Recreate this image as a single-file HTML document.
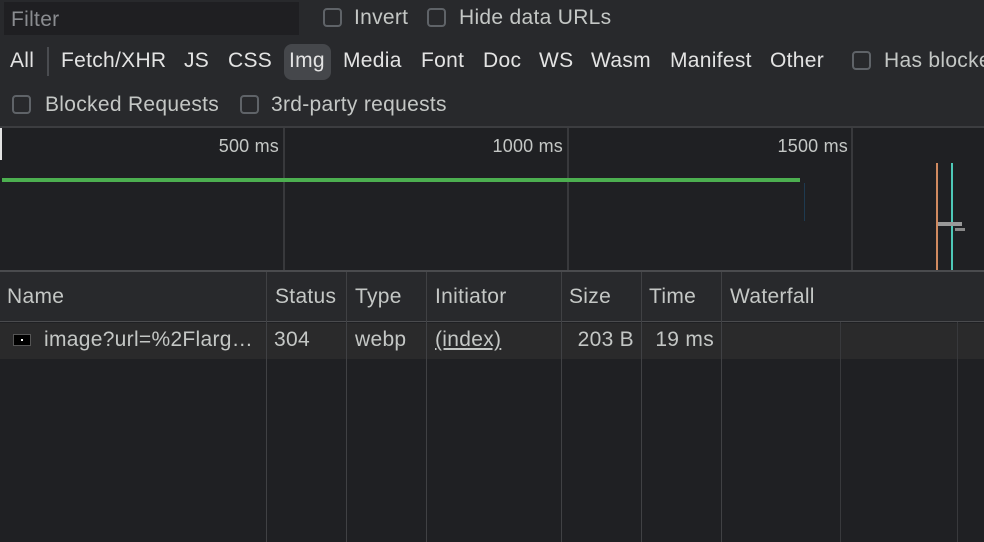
<!DOCTYPE html>
<html><head><style>
*{margin:0;padding:0;box-sizing:border-box}
html,body{width:984px;height:542px;overflow:hidden}
body{background:#28292c;font-family:"Liberation Sans",sans-serif;font-size:21px;letter-spacing:0.3px;color:#e3e3e3;position:relative}
.a{position:absolute;white-space:nowrap}
.cb{position:absolute;width:19px;height:19px;border:2px solid #5f6368;border-radius:4px;background:#28292c}
.t{line-height:24px}
.g{color:#c4c7c5}
</style></head><body>
<div class="a" style="left:4px;top:2px;width:295px;height:33px;background:#1f1f22"></div>
<div class="a t" style="left:11px;top:8px;color:#8a8c90">Filter</div>
<div class="cb" style="left:323px;top:8px"></div><div class="a t g" style="left:354px;top:6px">Invert</div>
<div class="cb" style="left:427px;top:8px"></div><div class="a t g" style="left:459px;top:6px">Hide data URLs</div>

<div class="a" style="left:284px;top:44px;width:47px;height:36px;background:#45474b;border-radius:8px"></div>
<div class="a" style="left:47px;top:47px;width:2px;height:29px;background:#4a4c50"></div>
<div class="a t" style="left:10px;top:49px">All</div>
<div class="a t" style="left:61px;top:49px">Fetch/XHR</div>
<div class="a t" style="left:184px;top:49px">JS</div>
<div class="a t" style="left:228px;top:49px">CSS</div>
<div class="a t" style="left:289px;top:49px">Img</div>
<div class="a t" style="left:343px;top:49px">Media</div>
<div class="a t" style="left:421px;top:49px">Font</div>
<div class="a t" style="left:483px;top:49px">Doc</div>
<div class="a t" style="left:539px;top:49px">WS</div>
<div class="a t" style="left:591px;top:49px">Wasm</div>
<div class="a t" style="left:670px;top:49px">Manifest</div>
<div class="a t" style="left:770px;top:49px">Other</div>
<div class="cb" style="left:852px;top:51px"></div>
<div class="a" style="left:884px;top:49px;width:100px;overflow:hidden"><div class="t g">Has blocked</div></div>

<div class="cb" style="left:12px;top:95px"></div><div class="a t g" style="left:45px;top:93px">Blocked Requests</div>
<div class="cb" style="left:240px;top:95px"></div><div class="a t g" style="left:271px;top:93px">3rd-party requests</div>

<!-- timeline -->
<div class="a" style="left:0;top:126px;width:984px;height:146px;background:#1f2023;border-top:2px solid #3c3d40;border-bottom:2px solid #4a4b4e"></div>
<div class="a" style="left:0;top:128px;width:2px;height:32px;background:#e3e3e3"></div>
<div class="a" style="left:283px;top:128px;width:2px;height:142px;background:#38393c"></div>
<div class="a" style="left:567px;top:128px;width:2px;height:142px;background:#38393c"></div>
<div class="a" style="left:851px;top:128px;width:2px;height:142px;background:#38393c"></div>
<div class="a t g" style="left:170px;top:134px;width:109px;text-align:right;font-size:18px;letter-spacing:0.2px">500 ms</div>
<div class="a t g" style="left:450px;top:134px;width:113px;text-align:right;font-size:18px;letter-spacing:0.2px">1000 ms</div>
<div class="a t g" style="left:735px;top:134px;width:113px;text-align:right;font-size:18px;letter-spacing:0.2px">1500 ms</div>
<div class="a" style="left:2px;top:178px;width:798px;height:4px;background:#4caf50"></div>
<div class="a" style="left:804px;top:183px;width:1px;height:38px;background:#1e3a50"></div>
<div class="a" style="left:936px;top:163px;width:2px;height:107px;background:#d08a60"></div>
<div class="a" style="left:951px;top:163px;width:2px;height:107px;background:#4ec9b8"></div>
<div class="a" style="left:938px;top:222px;width:24px;height:4px;background:#999"></div>
<div class="a" style="left:955px;top:228px;width:10px;height:3px;background:#888"></div>

<!-- table -->
<div class="a" style="left:0;top:272px;width:984px;height:270px;background:#1f2023"></div>
<div class="a" style="left:0;top:272px;width:984px;height:50px;background:#28292c;border-bottom:1px solid #4a4b4e"></div>
<div class="a" style="left:0;top:323px;width:984px;height:36px;background:#2a2a2b"></div>
<div class="a" style="left:266px;top:272px;width:1px;height:270px;background:#404144"></div>
<div class="a" style="left:346px;top:272px;width:1px;height:270px;background:#404144"></div>
<div class="a" style="left:426px;top:272px;width:1px;height:270px;background:#404144"></div>
<div class="a" style="left:561px;top:272px;width:1px;height:270px;background:#404144"></div>
<div class="a" style="left:641px;top:272px;width:1px;height:270px;background:#404144"></div>
<div class="a" style="left:721px;top:272px;width:1px;height:270px;background:#404144"></div>
<div class="a" style="left:840px;top:322px;width:1px;height:220px;background:#38393c"></div>
<div class="a" style="left:957px;top:322px;width:1px;height:220px;background:#38393c"></div>
<div class="a t g" style="left:7px;top:285px">Name</div>
<div class="a t g" style="left:275px;top:285px">Status</div>
<div class="a t g" style="left:355px;top:285px">Type</div>
<div class="a t g" style="left:435px;top:285px">Initiator</div>
<div class="a t g" style="left:569px;top:285px">Size</div>
<div class="a t g" style="left:649px;top:285px">Time</div>
<div class="a t g" style="left:730px;top:285px">Waterfall</div>
<div class="a" style="left:13px;top:334px;width:18px;height:12px;background:#000;border:1px solid #555"></div>
<div class="a" style="left:21px;top:339px;width:2px;height:2px;background:#fff"></div>
<div class="a t g" style="left:44px;top:328px">image?url=%2Flarg…</div>
<div class="a t g" style="left:274px;top:328px">304</div>
<div class="a t g" style="left:355px;top:328px">webp</div>
<div class="a t g" style="left:435px;top:328px;text-decoration:underline">(index)</div>
<div class="a t g" style="left:558px;top:328px;width:76px;text-align:right">203 B</div>
<div class="a t g" style="left:638px;top:328px;width:76px;text-align:right">19 ms</div>
</body></html>
